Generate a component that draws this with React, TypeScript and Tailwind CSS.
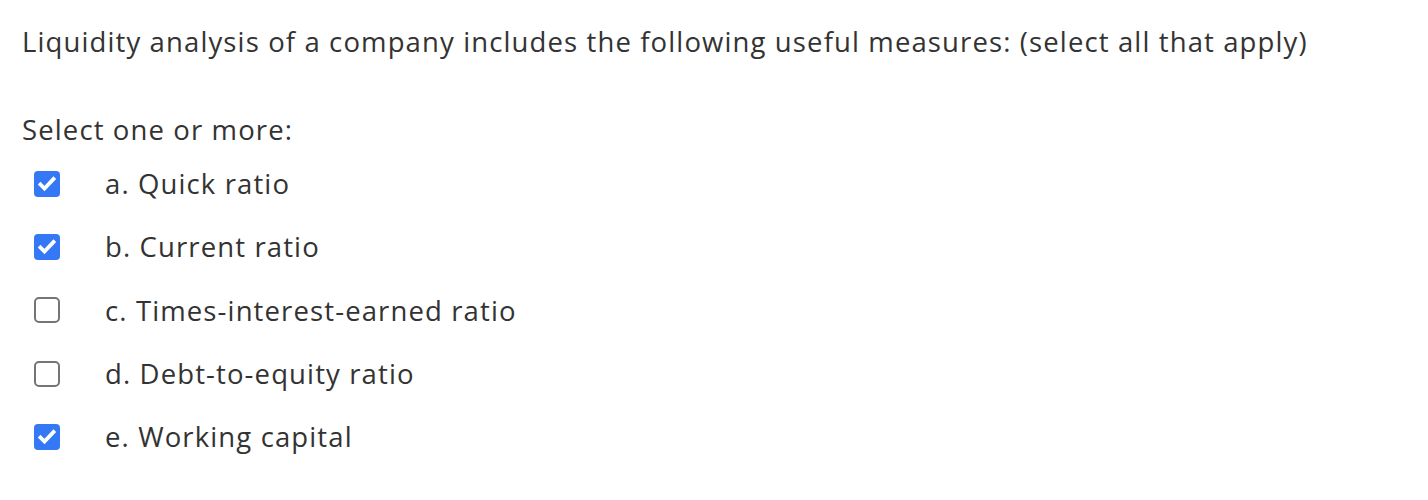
import React from "react";

const options = [
  { label: "a. Quick ratio", checked: true },
  { label: "b. Current ratio", checked: true },
  { label: "c. Times-interest-earned ratio", checked: false },
  { label: "d. Debt-to-equity ratio", checked: false },
  { label: "e. Working capital", checked: true },
];

function Box({ checked }: { checked: boolean }) {
  if (checked) {
    return (
      <div className="w-[26px] h-[26px] rounded-[4px] bg-[#3478f6]">
        <svg width="26" height="26" viewBox="0 0 26 26">
          <path d="M6.5 13.5 L10.5 17.5 L19.5 8" fill="none" stroke="white" strokeWidth="3.8" strokeLinecap="square" strokeLinejoin="miter" />
        </svg>
      </div>
    );
  }
  return <div className="w-[26px] h-[26px] rounded-[5px] border-2 border-[#757575] bg-white" />;
}

export default function App() {
  return (
    <div className="w-[1428px] h-[500px] bg-white text-[#333333] px-[22px] pt-[20px] tracking-[1.12px] font-[450]" style={{ fontFamily: '"Open Sans", sans-serif' }}>
      <p className="text-[27.5px] leading-[44px]">
        Liquidity analysis of a company includes the following useful measures: (select all that apply)
      </p>
      <p className="text-[27.5px] leading-[44px] mt-[44px]">Select one or more:</p>
      <div className="flex flex-col">
        {options.map((o) => (
          <div key={o.label} className="flex items-center h-[63.3px]">
            <div className="ml-[12px] w-[71px]">
              <Box checked={o.checked} />
            </div>
            <span className="text-[27.5px]">{o.label}</span>
          </div>
        ))}
      </div>
    </div>
  );
}
